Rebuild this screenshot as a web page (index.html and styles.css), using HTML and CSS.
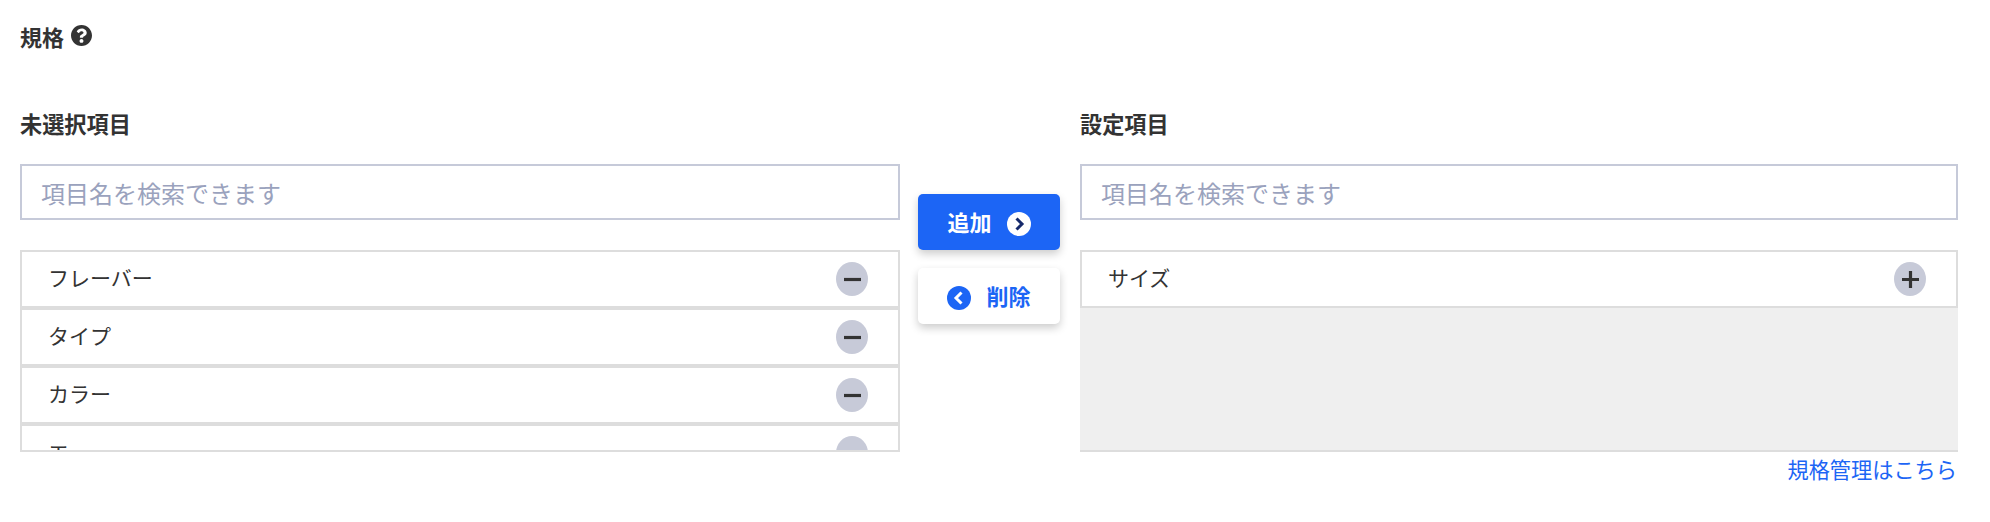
FILE: index.html
```html
<!DOCTYPE html>
<html lang="ja">
  <head>
    <meta charset="UTF-8" />
    <title>規格</title>
    <link rel="stylesheet" href="styles.css">
  </head>
  <body>
    <h2 class="page-title">
      規格
      <svg class="help-icon" viewBox="8 8 496 496"><path fill="#333" d="M504 256c0 136.997-111.043 248-248 248S8 392.997 8 256C8 119.083 119.043 8 256 8s248 111.083 248 248zM262.655 90c-54.497 0-89.255 22.957-116.549 63.758-3.536 5.286-2.353 12.415 2.715 16.258l34.699 26.31c5.205 3.947 12.621 3.008 16.665-2.122 17.864-22.658 30.113-35.797 57.303-35.797 20.429 0 45.698 13.148 45.698 32.958 0 14.976-12.363 22.667-32.534 33.976C247.128 238.528 216 254.941 216 296v4c0 6.627 5.373 12 12 12h56c6.627 0 12-5.373 12-12v-1.333c0-28.462 83.186-29.647 83.186-106.667 0-58.002-60.165-102-116.531-102zM256 338c-25.365 0-46 20.635-46 46 0 25.364 20.635 46 46 46s46-20.636 46-46c0-25.365-20.635-46-46-46z"/></svg>
    </h2>

    <div class="picker">
      <section class="column">
        <h3 class="column-title">未選択項目</h3>
        <input class="search" type="text" placeholder="項目名を検索できます" />
        <ul class="list">
          <li class="item"><span class="item-name">フレーバー</span>
            <span class="round-btn"><svg viewBox="0 0 16 16"><path d="M0 8h16" /></svg></span>
          </li>
          <li class="item"><span class="item-name">タイプ</span>
            <span class="round-btn"><svg viewBox="0 0 16 16"><path d="M0 8h16" /></svg></span>
          </li>
          <li class="item"><span class="item-name">カラー</span>
            <span class="round-btn"><svg viewBox="0 0 16 16"><path d="M0 8h16" /></svg></span>
          </li>
          <li class="item"><span class="item-name">エ</span>
            <span class="round-btn"><svg viewBox="0 0 16 16"><path d="M0 8h16" /></svg></span>
          </li>
        </ul>
      </section>

      <div class="actions">
        <button class="action action-add">
          追加
          <svg class="action-icon" viewBox="0 0 24 24"><circle cx="12" cy="12" r="12" fill="#fff" /><path d="M9.5 6.5l5.5 5.5-5.5 5.5" fill="none" stroke="#15296b" stroke-width="3" /></svg>
        </button>
        <button class="action action-remove">
          <svg class="action-icon" viewBox="0 0 24 24"><circle cx="12" cy="12" r="12" fill="#1c65f5" /><path d="M14.5 6.5L9 12l5.5 5.5" fill="none" stroke="#fff" stroke-width="3" /></svg>
          削除
        </button>
      </div>

      <section class="column">
        <h3 class="column-title">設定項目</h3>
        <input class="search" type="text" placeholder="項目名を検索できます" />
        <ul class="list list-selected">
          <li class="item"><span class="item-name">サイズ</span>
            <span class="round-btn"><svg viewBox="0 0 16 16"><path d="M0 8h16M8 0v16" /></svg></span>
          </li>
        </ul>
        <a href="#" class="manage-link">規格管理はこちら</a>
      </section>
    </div>
  </body>
</html>
```

FILE: styles.css
```css
html {
  font-family: "Noto Sans CJK JP", "Noto Sans", sans-serif;
  color: #333;
}
body {
  margin: 0;
  padding: 0 32px 0 20px;
  background-color: #fff;
}
.page-title {
  display: flex;
  align-items: center;
  gap: 7px;
  height: 72px;
  margin: 0 0 2px;
  font-size: 22px;
  font-weight: 700;
}
.help-icon {
  width: 21px;
  height: 21px;
  margin-top: -1px;
}

/* three columns: available, buttons, selected */
.picker {
  display: grid;
  grid-template-columns: 880px 180px 878px;
}
.column-title {
  height: 41px;
  margin: 29px 0 0;
  font-size: 22.2px;
  line-height: 40px;
  font-weight: 700;
}
.search {
  display: block;
  box-sizing: border-box;
  width: 100%;
  height: 56px;
  margin-top: 20px;
  padding: 0 19px;
  border: 2px solid #c6cad9;
  border-radius: 0;
  outline: none;
  font-family: inherit;
  font-size: 24px;
  color: #333;
}
.search::placeholder {
  color: #9aa2bd;
  opacity: 1;
}

/************************
  LISTS
************************/
.list {
  box-sizing: border-box;
  height: 202px;
  margin: 30px 0 0;
  padding: 0;
  overflow: hidden;
  list-style: none;
  border-bottom: 2px solid #ddd;
}
.list-selected {
  background-color: #efefef;
}
.item {
  box-sizing: border-box;
  display: flex;
  justify-content: space-between;
  align-items: center;
  height: 58px;
  padding: 0 30px 0 26px;
  border: 2px solid #ddd;
  background-color: #fff;
  font-size: 21px;
}
.item-name {
  padding-bottom: 4px;
}
.round-btn {
  display: flex;
  justify-content: center;
  align-items: center;
  flex: none;
  width: 32px;
  height: 34px;
  border-radius: 50%;
  background-color: #c7cad8;
}
.round-btn svg {
  width: 17px;
  height: 17px;
  fill: none;
  stroke: #333;
  stroke-width: 3;
}

/************************
  MIDDLE BUTTONS
************************/
.actions {
  display: flex;
  flex-direction: column;
  gap: 18px;
  width: 142px;
  padding: 120px 0 0 18px;
}
.action {
  display: flex;
  justify-content: center;
  align-items: center;
  gap: 15px;
  height: 56px;
  padding: 0 0 2px;
  border: none;
  border-radius: 5px;
  font-family: inherit;
  font-size: 22px;
  font-weight: 700;
  box-shadow: 0 4px 8px rgba(0, 0, 0, 0.2);
  cursor: pointer;
}
.action-add {
  background-color: #1c65f5;
  color: #fff;
}
.action-remove {
  background-color: #fff;
  color: #1c65f5;
}
.action-icon {
  width: 24px;
  height: 24px;
  margin-top: 6px;
}

.manage-link {
  display: block;
  margin-top: 1px;
  padding-right: 1px;
  text-align: right;
  font-size: 21.2px;
  line-height: 32px;
  color: #1c65f5;
  text-decoration: none;
}
```
